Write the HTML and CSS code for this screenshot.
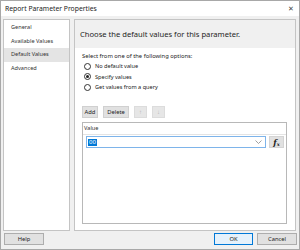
FILE: index.html
```html
<!DOCTYPE html>
<html>
<head>
<meta charset="utf-8">
<link rel="stylesheet" href="styles.css">
</head>
<body>
<div class="dialog">
  <div class="titlebar">
    <span class="title">Report Parameter Properties</span>
    <span class="close">✕</span>
  </div>
  <div class="main">
    <div class="nav">
      <div class="nav-item">General</div>
      <div class="nav-item">Available Values</div>
      <div class="nav-item selected">Default Values</div>
      <div class="nav-item">Advanced</div>
    </div>
    <div class="content">
      <div class="header">Choose the default values for this parameter.</div>
      <div class="body">
        <div class="prompt">Select from one of the following options:</div>
        <div class="radios">
          <div class="radio"><span class="circle"></span><span>No default value</span></div>
          <div class="radio"><span class="circle checked"></span><span>Specify values</span></div>
          <div class="radio"><span class="circle"></span><span>Get values from a query</span></div>
        </div>
        <div class="toolbar">
          <span class="btn btn-add">Add</span>
          <span class="btn btn-del">Delete</span>
          <span class="btn btn-dis">↑</span>
          <span class="btn btn-dis">↓</span>
        </div>
        <div class="grid">
          <div class="grid-head">Value</div>
          <div class="grid-row">
            <div class="combo">
              <span class="sel">00</span>
              <svg class="chev" width="7" height="4" viewBox="0 0 7 4"><path d="M0.5 0.5 L3.5 3.5 L6.5 0.5" fill="none" stroke="#888" stroke-width="0.8"/></svg>
            </div>
            <div class="fx"><span class="f">f</span><span class="x">x</span></div>
          </div>
        </div>
      </div>
    </div>
  </div>
  <div class="footer">
    <span class="fbtn help">Help</span>
    <span class="spacer"></span>
    <span class="fbtn ok">OK</span>
    <span class="fbtn cancel">Cancel</span>
  </div>
</div>
</body>
</html>
```
FILE: styles.css
```css
html, body {
  margin: 0;
  padding: 0;
}
body {
  width: 300px;
  height: 250px;
  font-family: "Noto Sans", "Open Sans", sans-serif;
  color: #1a1a1a;
  background: #ffffff;
}
.dialog {
  box-sizing: border-box;
  width: 300px;
  height: 250px;
  border: 1px solid #a8a8a8;
  background: #f0f0f0;
  display: flex;
  flex-direction: column;
}
.titlebar {
  height: 15px;
  background: #ffffff;
  display: flex;
  align-items: center;
  padding: 0 4px 0 4px;
  font-size: 6.8px;
  flex-shrink: 0;
}
.title {
  flex: 1;
  color: #222;
}
.close {
  font-size: 7px;
  color: #444;
  margin-right: 1px;
}
.main {
  display: flex;
  gap: 4px;
  padding: 3px 3px 0 2px;
  height: 212px;
  flex-shrink: 0;
}
.nav {
  box-sizing: border-box;
  width: 67px;
  background: #ffffff;
  border: 1px solid #c4c4c4;
  padding-top: 1px;
  display: flex;
  flex-direction: column;
}
.nav-item {
  height: 13.5px;
  line-height: 13.5px;
  padding-left: 7px;
  font-size: 5.6px;
  color: #333;
}
.nav-item.selected {
  background: #e4e4e4;
}
.content {
  box-sizing: border-box;
  flex: 1;
  background: #ffffff;
  border: 1px solid #c4c4c4;
  display: flex;
  flex-direction: column;
}
.header {
  height: 28px;
  background: #f0f0f0;
  display: flex;
  align-items: center;
  padding-left: 5px;
  font-size: 7.6px;
  color: #1e1e1e;
  flex-shrink: 0;
}
.body {
  flex: 1;
  display: flex;
  flex-direction: column;
  padding: 3px 8px 6px 7px;
}
.prompt {
  font-size: 5.8px;
  color: #222;
  height: 10px;
  line-height: 10px;
}
.radios {
  display: flex;
  flex-direction: column;
  padding-left: 2px;
}
.radio {
  display: flex;
  align-items: center;
  gap: 4px;
  height: 10.5px;
  font-size: 5.6px;
  color: #222;
}
.circle {
  box-sizing: border-box;
  width: 7px;
  height: 7px;
  border-radius: 50%;
  border: 1px solid #333;
  background: #fff;
  display: flex;
  align-items: center;
  justify-content: center;
}
.circle.checked::after {
  content: "";
  width: 3px;
  height: 3px;
  border-radius: 50%;
  background: #222;
}
.toolbar {
  display: flex;
  gap: 5px;
  margin-top: 13px;
  height: 12px;
}
.btn {
  box-sizing: border-box;
  height: 12px;
  background: #e1e1e1;
  border: 1px solid #d0d0d0;
  font-size: 5.8px;
  display: flex;
  align-items: center;
  justify-content: center;
  color: #222;
}
.btn-add {
  width: 16px;
}
.btn-del {
  width: 26px;
}
.btn-dis {
  width: 13px;
  color: #b5b5b5;
  font-size: 6px;
  background: #e6e6e6;
  border-color: #dcdcdc;
}
.grid {
  box-sizing: border-box;
  margin-top: 4px;
  flex: 1;
  border: 1px solid #b8b8b8;
  background: #fff;
  display: flex;
  flex-direction: column;
}
.grid-head {
  height: 11px;
  line-height: 11px;
  font-size: 5.6px;
  padding-left: 1px;
  color: #333;
  border-bottom: 1px solid #e4e4e4;
}
.grid-row {
  display: flex;
  align-items: center;
  gap: 3px;
  padding: 1px 2px 1px 3px;
  height: 13px;
}
.combo {
  box-sizing: border-box;
  flex: 1;
  height: 12px;
  border: 1px solid #7eb4ea;
  background: #fff;
  display: flex;
  align-items: center;
  padding-left: 1px;
  padding-right: 3px;
}
.sel {
  background: #0078d7;
  color: #fff;
  font-size: 6px;
  line-height: 7px;
  padding: 0 1px;
}
.chev {
  margin-left: auto;
}
.fx {
  box-sizing: border-box;
  width: 15px;
  height: 12px;
  background: #e1e1e1;
  border: 1px solid #d4d4d4;
  display: flex;
  align-items: center;
  justify-content: center;
  font-family: "DejaVu Serif", serif;
  font-style: italic;
  font-weight: bold;
  color: #222;
}
.fx .f {
  font-size: 8px;
}
.fx .x {
  font-size: 5px;
  margin-top: 3px;
}
.footer {
  display: flex;
  align-items: center;
  padding: 2px 2px 0 3px;
  gap: 4px;
  height: 12px;
}
.spacer {
  flex: 1;
}
.fbtn {
  box-sizing: border-box;
  height: 12px;
  background: #e1e1e1;
  border: 1px solid #adadad;
  font-size: 5.8px;
  display: flex;
  align-items: center;
  justify-content: center;
  color: #222;
}
.help {
  width: 40px;
}
.ok {
  width: 39px;
  background: #e5f1fb;
  border-color: #0078d7;
}
.cancel {
  width: 40px;
}
```
